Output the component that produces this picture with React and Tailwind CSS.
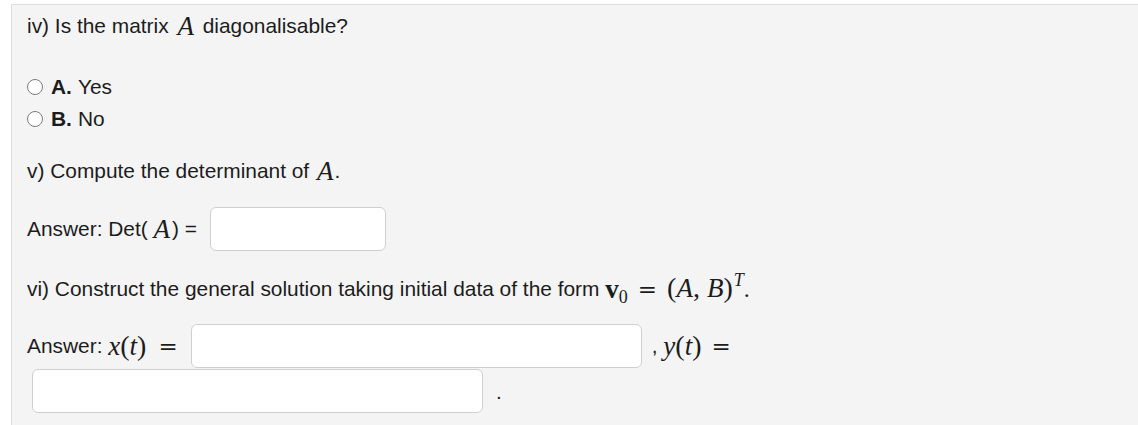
import React from 'react';

const sans = { fontFamily: '"Liberation Sans", Arial, sans-serif' };

// Math in a serif italic, a bit larger than the body text
const M = ({ children, className = '' }) => (
    <span className={`font-['Liberation_Serif',serif] italic text-[27px] leading-none ${className}`}>{children}</span>
);
const Eq = ({ className = '' }) => (
    <span className={`font-['DejaVu_Serif',serif] text-[23px] leading-none ${className}`}>=</span>
);
const Paren = ({ children }) => (
    <span className="font-['Liberation_Serif',serif] text-[28px] leading-none">{children}</span>
);

const Radio = ({ letter, label }) => (
    <div className="flex items-center h-[32px]">
        <span className="w-[16px] h-[16px] rounded-full border border-[#7a7a7a] bg-white shrink-0" />
        <span className="ml-[8px] font-bold">{letter}</span>
        <span className="ml-[6px]">{label}</span>
    </div>
);

const Box = ({ w }) => (
    <div className={`h-[44px] ${w} bg-white border border-[#cfcfcf] rounded-[6px] shrink-0`} />
);

export default function App() {
    return (
        <div className="min-h-screen bg-white pl-[11px] pt-[4px]" style={sans}>
            <div className="min-h-[421px] bg-[#f4f4f4] border-l border-t border-[#dedede] pl-[15px] pt-[6px] text-[20.9px] text-[#1c1c1c]">
                {/* iv */}
                <div className="flex items-center h-[30px]">
                    <span>iv) Is the matrix&nbsp;</span>
                    <M className="mx-[3px]">A</M>
                    <span>&nbsp;diagonalisable?</span>
                </div>

                <div className="mt-[30px]">
                    <Radio letter="A." label="Yes" />
                    <Radio letter="B." label="No" />
                </div>

                {/* v */}
                <div className="flex items-center h-[30px] mt-[21px]">
                    <span>v) Compute the determinant of&nbsp;</span>
                    <M className="ml-[2px]">A</M>
                    <span className="ml-[1px]">.</span>
                </div>

                <div className="flex items-center mt-[21px]">
                    <span>Answer: Det(&nbsp;</span>
                    <M className="mr-[2px]">A</M>
                    <span>) =</span>
                    <div className="ml-[13px]">
                        <Box w="w-[176px]" />
                    </div>
                </div>

                {/* vi */}
                <div className="flex items-center h-[30px] mt-[23px]">
                    <span>vi) Construct the general solution taking initial data of the form&nbsp;</span>
                    <span className="font-['Liberation_Serif',serif] font-bold text-[27px] leading-none">v<span className="relative top-[5px] font-normal text-[18px]">0</span></span>
                    <Eq className="mx-[10px]" />
                    <span className="whitespace-nowrap">
                        <Paren>(</Paren>
                        <M>A</M>
                        <Paren>,&nbsp;</Paren>
                        <M>B</M>
                        <Paren>)</Paren>
                        <span className="relative -top-[11px] ml-[1px] font-['Liberation_Serif',serif] italic text-[18px]">T</span>
                        <span className="font-['Liberation_Serif',serif] text-[24px]">.</span>
                    </span>
                </div>

                <div className="flex items-center mt-[20px]">
                    <span>Answer:&nbsp;</span>
                    <M>x</M>
                    <Paren>(</Paren>
                    <M>t</M>
                    <Paren>)</Paren>
                    <Eq className="ml-[12px]" />
                    <div className="ml-[13px]">
                        <Box w="w-[451px]" />
                    </div>
                    <span className="ml-[10px]">,&nbsp;</span>
                    <M>y</M>
                    <Paren>(</Paren>
                    <M>t</M>
                    <Paren>)</Paren>
                    <Eq className="ml-[10px]" />
                </div>

                <div className="flex items-end mt-[1px] pl-[5px]">
                    <Box w="w-[451px]" />
                    <span className="ml-[13px] mb-[6px]">.</span>
                </div>
            </div>
        </div>
    );
}
